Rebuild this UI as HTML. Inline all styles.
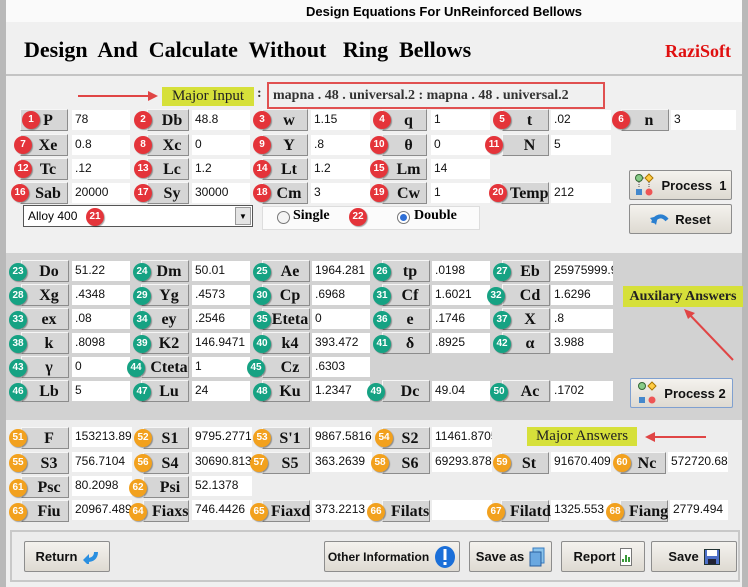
<!DOCTYPE html>
<html><head><meta charset="utf-8"><style>
*{margin:0;padding:0;box-sizing:border-box}
body{width:748px;height:587px;overflow:hidden;background:#b9b9b9;position:relative;font-family:"Liberation Sans",sans-serif}
u{text-decoration:none}
.a{position:absolute}
.c{position:absolute;width:18px;height:18px;border-radius:50%;color:#fff;font:bold 10px "Liberation Sans",sans-serif;font-style:normal;text-align:center;line-height:18px;z-index:2;box-shadow:1px 1px 1px rgba(0,0,0,.35)}
.r{background:#e4343a}.g{background:#16a283}.o{background:#f2a11e}
.l{position:absolute;height:22px;background:#d6d6d6;border:1px solid;border-color:#f6f6f6 #8c8c8c #8c8c8c #f6f6f6;font:bold 16px "Liberation Serif",serif;color:#111;text-align:center;line-height:22px;padding-left:8px;white-space:nowrap}
.v{position:absolute;height:20px;background:#fff;font:12px "Liberation Sans",sans-serif;line-height:18px;padding-left:3px;overflow:hidden;white-space:nowrap;color:#111}
.b{position:absolute;background:linear-gradient(#f4f2ee,#dedad2);border:1px solid #8d8d8d;border-radius:2px;font:bold 13px "Liberation Sans",sans-serif;display:flex;align-items:center;justify-content:center;gap:5px;color:#111;white-space:nowrap}
.y{position:absolute;background:#d6e03a;font:15px "Liberation Serif",serif;color:#222;text-align:center}
</style></head><body>
<div class="a" style="left:6px;top:0;width:736px;height:587px;background:#f0f0f0"></div>
<div class="a" style="left:6px;top:0;width:736px;height:22px;background:#fafafa;font:bold 13px 'Liberation Sans',sans-serif;text-align:center;line-height:24px;padding-left:140px">Design Equations For UnReinforced Bellows</div>
<div class="a" style="left:24px;top:37px;font:bold 22px 'Liberation Serif',serif;white-space:pre">Design  And  Calculate  Without   Ring  Bellows</div>
<div class="a" style="left:665px;top:41px;font:bold 18px 'Liberation Serif',serif;color:#e01010">RaziSoft</div>
<div class="a" style="left:6px;top:74px;width:736px;height:2px;background:#c4c4c4"></div>
<!-- top section -->
<div class="a" style="left:78px;top:95px;width:72px;height:2px;background:#e04545"></div>
<div class="a" style="left:148px;top:91px;border-left:10px solid #e04545;border-top:5px solid transparent;border-bottom:5px solid transparent"></div>
<div class="y" style="left:162px;top:87px;width:92px;height:19px;line-height:19px">Major Input</div>
<div class="a" style="left:257px;top:86px;font:bold 14px 'Liberation Serif',serif;color:#333">:</div>
<div class="a" style="left:267px;top:82px;width:338px;height:27px;border:2px solid #e05050;font:bold 14px 'Liberation Serif',serif;color:#333;line-height:23px;padding-left:4px;white-space:nowrap">mapna . 48 . universal.2 : mapna . 48 . universal.2</div>

<i class="c r" style="left:22px;top:111px">1</i><b class="l" style="left:20px;top:109px;width:48px">P</b><u class="v" style="left:72px;top:110px;width:58px">78</u>
<i class="c r" style="left:134px;top:111px">2</i><b class="l" style="left:147px;top:109px;width:42px">Db</b><u class="v" style="left:192px;top:110px;width:58px">48.8</u>
<i class="c r" style="left:253px;top:111px">3</i><b class="l" style="left:262px;top:109px;width:46px">w</b><u class="v" style="left:311px;top:110px;width:59px">1.15</u>
<i class="c r" style="left:373px;top:111px">4</i><b class="l" style="left:382px;top:109px;width:45px">q</b><u class="v" style="left:431px;top:110px;width:59px">1</u>
<i class="c r" style="left:493px;top:111px">5</i><b class="l" style="left:502px;top:109px;width:47px">t</b><u class="v" style="left:551px;top:110px;width:60px">.02</u>
<i class="c r" style="left:612px;top:111px">6</i><b class="l" style="left:621px;top:109px;width:48px">n</b><u class="v" style="left:671px;top:110px;width:65px">3</u>

<i class="c r" style="left:14px;top:136px">7</i><b class="l" style="left:20px;top:134px;width:48px">Xe</b><u class="v" style="left:72px;top:135px;width:58px">0.8</u>
<i class="c r" style="left:134px;top:136px">8</i><b class="l" style="left:147px;top:134px;width:42px">Xc</b><u class="v" style="left:192px;top:135px;width:58px">0</u>
<i class="c r" style="left:253px;top:136px">9</i><b class="l" style="left:262px;top:134px;width:46px">Y</b><u class="v" style="left:311px;top:135px;width:59px">.8</u>
<i class="c r" style="left:370px;top:136px">10</i><b class="l" style="left:382px;top:134px;width:45px">θ</b><u class="v" style="left:431px;top:135px;width:59px">0</u>
<i class="c r" style="left:485px;top:136px">11</i><b class="l" style="left:502px;top:134px;width:47px">N</b><u class="v" style="left:551px;top:135px;width:60px">5</u>

<i class="c r" style="left:14px;top:160px">12</i><b class="l" style="left:20px;top:158px;width:48px">Tc</b><u class="v" style="left:72px;top:159px;width:58px">.12</u>
<i class="c r" style="left:134px;top:160px">13</i><b class="l" style="left:147px;top:158px;width:42px">Lc</b><u class="v" style="left:192px;top:159px;width:58px">1.2</u>
<i class="c r" style="left:253px;top:160px">14</i><b class="l" style="left:262px;top:158px;width:46px">Lt</b><u class="v" style="left:311px;top:159px;width:59px">1.2</u>
<i class="c r" style="left:370px;top:160px">15</i><b class="l" style="left:382px;top:158px;width:45px">Lm</b><u class="v" style="left:431px;top:159px;width:59px">14</u>

<i class="c r" style="left:11px;top:184px">16</i><b class="l" style="left:20px;top:182px;width:48px">Sab</b><u class="v" style="left:72px;top:183px;width:58px">20000</u>
<i class="c r" style="left:134px;top:184px">17</i><b class="l" style="left:147px;top:182px;width:42px">Sy</b><u class="v" style="left:192px;top:183px;width:58px">30000</u>
<i class="c r" style="left:253px;top:184px">18</i><b class="l" style="left:262px;top:182px;width:46px">Cm</b><u class="v" style="left:311px;top:183px;width:59px">3</u>
<i class="c r" style="left:370px;top:184px">19</i><b class="l" style="left:382px;top:182px;width:45px">Cw</b><u class="v" style="left:431px;top:183px;width:59px">1</u>
<i class="c r" style="left:489px;top:184px">20</i><b class="l" style="left:501px;top:182px;width:48px">Temp</b><u class="v" style="left:551px;top:183px;width:60px">212</u>

<div class="a" style="left:23px;top:205px;width:230px;height:22px;background:#fff;border:1px solid #555;font:12px 'Liberation Sans',sans-serif;line-height:20px;padding-left:4px">Alloy 400</div>
<div class="a" style="left:235px;top:207px;width:16px;height:18px;background:#e4e4e4;border:1px solid #999;font-size:8px;text-align:center;line-height:17px">▼</div>
<i class="c r" style="left:86px;top:208px">21</i>
<div class="a" style="left:262px;top:206px;width:218px;height:24px;background:#fbfbfb;border:1px solid #ddd"></div>
<div class="a" style="left:277px;top:211px;width:13px;height:13px;border-radius:50%;border:1px solid #777;background:#f4f4f4"></div>
<div class="a" style="left:293px;top:208px;font:bold 14px 'Liberation Serif',serif">Single</div>
<i class="c r" style="left:349px;top:208px">22</i>
<div class="a" style="left:397px;top:211px;width:13px;height:13px;border-radius:50%;border:1px solid #777;background:#fff"><div style="margin:2px;width:7px;height:7px;border-radius:50%;background:#2f6fd6"></div></div>
<div class="a" style="left:414px;top:208px;font:bold 14px 'Liberation Serif',serif">Double</div>

<div class="b" style="left:629px;top:170px;width:103px;height:30px"><svg width="22" height="24"><circle cx="5" cy="5" r="3.5" fill="#8c8" stroke="#363"/><path d="M15 1l4 4-4 4-4-4z" fill="#fc4" stroke="#a70"/><rect x="2" y="16" width="6" height="6" fill="#48c"/><circle cx="15" cy="19" r="3.5" fill="#e55"/><path d="M9 5h2M5 9v6M15 9v6" stroke="#555" stroke-dasharray="1 1"/></svg>Process &nbsp;1</div>
<div class="b" style="left:629px;top:204px;width:103px;height:30px"><svg width="20" height="14"><path d="M3 11C5 4 12 2 17 8" fill="none" stroke="#2a7fd0" stroke-width="4"/><path d="M0 6l6 7 2-9z" fill="#2a7fd0"/></svg>Reset</div>

<!-- middle -->
<div class="a" style="left:6px;top:253px;width:736px;height:167px;background:#d2d2d2"></div>
<i class="c g" style="left:9px;top:263px">23</i><b class="l" style="left:21px;top:260px;width:48px">Do</b><u class="v" style="left:72px;top:261px;width:58px">51.22</u>
<i class="c g" style="left:133px;top:263px">24</i><b class="l" style="left:141px;top:260px;width:48px">Dm</b><u class="v" style="left:192px;top:261px;width:58px">50.01</u>
<i class="c g" style="left:253px;top:263px">25</i><b class="l" style="left:262px;top:260px;width:48px">Ae</b><u class="v" style="left:312px;top:261px;width:58px">1964.281</u>
<i class="c g" style="left:373px;top:263px">26</i><b class="l" style="left:382px;top:260px;width:48px">tp</b><u class="v" style="left:432px;top:261px;width:58px">.0198</u>
<i class="c g" style="left:493px;top:263px">27</i><b class="l" style="left:502px;top:260px;width:48px">Eb</b><u class="v" style="left:551px;top:261px;width:62px">25975999.9</u>

<i class="c g" style="left:9px;top:287px">28</i><b class="l" style="left:21px;top:284px;width:48px">Xg</b><u class="v" style="left:72px;top:285px;width:58px">.4348</u>
<i class="c g" style="left:133px;top:287px">29</i><b class="l" style="left:141px;top:284px;width:48px">Yg</b><u class="v" style="left:192px;top:285px;width:58px">.4573</u>
<i class="c g" style="left:253px;top:287px">30</i><b class="l" style="left:262px;top:284px;width:48px">Cp</b><u class="v" style="left:312px;top:285px;width:58px">.6968</u>
<i class="c g" style="left:373px;top:287px">31</i><b class="l" style="left:382px;top:284px;width:48px">Cf</b><u class="v" style="left:432px;top:285px;width:58px">1.6021</u>
<i class="c g" style="left:487px;top:287px">32</i><b class="l" style="left:502px;top:284px;width:48px">Cd</b><u class="v" style="left:551px;top:285px;width:62px">1.6296</u>

<i class="c g" style="left:9px;top:311px">33</i><b class="l" style="left:21px;top:308px;width:48px">ex</b><u class="v" style="left:72px;top:309px;width:58px">.08</u>
<i class="c g" style="left:133px;top:311px">34</i><b class="l" style="left:141px;top:308px;width:48px">ey</b><u class="v" style="left:192px;top:309px;width:58px">.2546</u>
<i class="c g" style="left:253px;top:311px">35</i><b class="l" style="left:262px;top:308px;width:48px">Eteta</b><u class="v" style="left:312px;top:309px;width:58px">0</u>
<i class="c g" style="left:373px;top:311px">36</i><b class="l" style="left:382px;top:308px;width:48px">e</b><u class="v" style="left:432px;top:309px;width:58px">.1746</u>
<i class="c g" style="left:493px;top:311px">37</i><b class="l" style="left:502px;top:308px;width:48px">X</b><u class="v" style="left:551px;top:309px;width:62px">.8</u>

<i class="c g" style="left:9px;top:335px">38</i><b class="l" style="left:21px;top:332px;width:48px">k</b><u class="v" style="left:72px;top:333px;width:58px">.8098</u>
<i class="c g" style="left:133px;top:335px">39</i><b class="l" style="left:141px;top:332px;width:48px">K2</b><u class="v" style="left:192px;top:333px;width:58px">146.9471</u>
<i class="c g" style="left:253px;top:335px">40</i><b class="l" style="left:262px;top:332px;width:48px">k4</b><u class="v" style="left:312px;top:333px;width:58px">393.472</u>
<i class="c g" style="left:373px;top:335px">41</i><b class="l" style="left:382px;top:332px;width:48px">δ</b><u class="v" style="left:432px;top:333px;width:58px">.8925</u>
<i class="c g" style="left:493px;top:335px">42</i><b class="l" style="left:502px;top:332px;width:48px">α</b><u class="v" style="left:551px;top:333px;width:62px">3.988</u>

<i class="c g" style="left:9px;top:359px">43</i><b class="l" style="left:21px;top:356px;width:48px">γ</b><u class="v" style="left:72px;top:357px;width:58px">0</u>
<i class="c g" style="left:127px;top:359px">44</i><b class="l" style="left:141px;top:356px;width:48px">Cteta</b><u class="v" style="left:192px;top:357px;width:58px">1</u>
<i class="c g" style="left:247px;top:359px">45</i><b class="l" style="left:262px;top:356px;width:48px">Cz</b><u class="v" style="left:312px;top:357px;width:58px">.6303</u>

<i class="c g" style="left:9px;top:383px">46</i><b class="l" style="left:21px;top:380px;width:48px">Lb</b><u class="v" style="left:72px;top:381px;width:58px">5</u>
<i class="c g" style="left:133px;top:383px">47</i><b class="l" style="left:141px;top:380px;width:48px">Lu</b><u class="v" style="left:192px;top:381px;width:58px">24</u>
<i class="c g" style="left:253px;top:383px">48</i><b class="l" style="left:262px;top:380px;width:48px">Ku</b><u class="v" style="left:312px;top:381px;width:58px">1.2347</u>
<i class="c g" style="left:367px;top:383px">49</i><b class="l" style="left:382px;top:380px;width:48px">Dc</b><u class="v" style="left:432px;top:381px;width:58px">49.04</u>
<i class="c g" style="left:490px;top:383px">50</i><b class="l" style="left:502px;top:380px;width:48px">Ac</b><u class="v" style="left:551px;top:381px;width:62px">.1702</u>

<div class="y" style="left:623px;top:286px;width:120px;height:21px;line-height:21px;font-weight:bold;font-size:14px">Auxilary Answers</div>
<svg class="a" style="left:680px;top:306px" width="60" height="60"><path d="M53 54L9 8" stroke="#e04545" stroke-width="2"/><path d="M4 3l11 4-7 6z" fill="#e04545"/></svg>
<div class="b" style="left:630px;top:378px;width:103px;height:30px;border-color:#7fa0d0"><svg width="22" height="24"><circle cx="5" cy="5" r="3.5" fill="#8c8" stroke="#363"/><path d="M15 1l4 4-4 4-4-4z" fill="#fc4" stroke="#a70"/><rect x="2" y="16" width="6" height="6" fill="#48c"/><circle cx="15" cy="19" r="3.5" fill="#e55"/></svg>Process 2</div>

<!-- bottom -->
<div class="a" style="left:6px;top:420px;width:736px;height:110px;background:#ededed"></div>
<div class="y" style="left:527px;top:427px;width:110px;height:19px;line-height:19px">Major Answers</div>
<div class="a" style="left:654px;top:436px;width:52px;height:2px;background:#e04545"></div>
<div class="a" style="left:645px;top:432px;border-right:10px solid #e04545;border-top:5px solid transparent;border-bottom:5px solid transparent"></div>

<i class="c o" style="left:9px;top:429px">51</i><b class="l" style="left:21px;top:427px;width:48px">F</b><u class="v" style="left:72px;top:427px;width:60px">153213.899</u>
<i class="c o" style="left:134px;top:429px">52</i><b class="l" style="left:143px;top:427px;width:46px">S1</b><u class="v" style="left:192px;top:427px;width:60px">9795.2771</u>
<i class="c o" style="left:253px;top:429px">53</i><b class="l" style="left:262px;top:427px;width:48px">S'1</b><u class="v" style="left:312px;top:427px;width:60px">9867.5816</u>
<i class="c o" style="left:375px;top:429px">54</i><b class="l" style="left:382px;top:427px;width:48px">S2</b><u class="v" style="left:432px;top:427px;width:60px">11461.8705</u>

<i class="c o" style="left:9px;top:454px">55</i><b class="l" style="left:21px;top:452px;width:48px">S3</b><u class="v" style="left:72px;top:452px;width:60px">756.7104</u>
<i class="c o" style="left:134px;top:454px">56</i><b class="l" style="left:143px;top:452px;width:46px">S4</b><u class="v" style="left:192px;top:452px;width:60px">30690.8131</u>
<i class="c o" style="left:250px;top:454px">57</i><b class="l" style="left:262px;top:452px;width:48px">S5</b><u class="v" style="left:312px;top:452px;width:60px">363.2639</u>
<i class="c o" style="left:371px;top:454px">58</i><b class="l" style="left:382px;top:452px;width:48px">S6</b><u class="v" style="left:432px;top:452px;width:60px">69293.8787</u>
<i class="c o" style="left:493px;top:454px">59</i><b class="l" style="left:501px;top:452px;width:48px">St</b><u class="v" style="left:551px;top:452px;width:60px">91670.409</u>
<i class="c o" style="left:613px;top:454px">60</i><b class="l" style="left:620px;top:452px;width:46px">Nc</b><u class="v" style="left:668px;top:452px;width:60px">572720.6839</u>

<i class="c o" style="left:9px;top:479px">61</i><b class="l" style="left:21px;top:476px;width:48px">Psc</b><u class="v" style="left:72px;top:476px;width:60px">80.2098</u>
<i class="c o" style="left:129px;top:479px">62</i><b class="l" style="left:143px;top:476px;width:46px">Psi</b><u class="v" style="left:192px;top:476px;width:60px">52.1378</u>

<i class="c o" style="left:9px;top:503px">63</i><b class="l" style="left:21px;top:500px;width:48px">Fiu</b><u class="v" style="left:72px;top:500px;width:60px">20967.4896</u>
<i class="c o" style="left:129px;top:503px">64</i><b class="l" style="left:143px;top:500px;width:46px">Fiaxs</b><u class="v" style="left:192px;top:500px;width:60px">746.4426</u>
<i class="c o" style="left:250px;top:503px">65</i><b class="l" style="left:262px;top:500px;width:48px">Fiaxd</b><u class="v" style="left:312px;top:500px;width:60px">373.2213</u>
<i class="c o" style="left:367px;top:503px">66</i><b class="l" style="left:382px;top:500px;width:48px">Filats</b><u class="v" style="left:432px;top:500px;width:60px"></u>
<i class="c o" style="left:487px;top:503px">67</i><b class="l" style="left:501px;top:500px;width:48px">Filatd</b><u class="v" style="left:551px;top:500px;width:60px">1325.553</u>
<i class="c o" style="left:606px;top:503px">68</i><b class="l" style="left:620px;top:500px;width:48px">Fiang</b><u class="v" style="left:670px;top:500px;width:58px">2779.494</u>

<!-- bottom bar -->
<div class="a" style="left:10px;top:530px;width:730px;height:52px;border:2px solid #c8c8c8;background:#ececec"></div>
<div class="b" style="left:24px;top:541px;width:86px;height:31px">Return <svg width="16" height="14"><path d="M14 2c0 6-4 8-9 8" fill="none" stroke="#2a8fe0" stroke-width="4"/><path d="M1 10l6-6v12z" fill="#2a8fe0"/></svg></div>
<div class="b" style="left:324px;top:541px;width:136px;height:31px;font-size:12px">Other Information <svg width="22" height="24"><ellipse cx="11" cy="12" rx="10" ry="11" fill="#1b6fd8"/><rect x="9.5" y="4" width="3" height="11" fill="#fff"/><rect x="9.5" y="17" width="3" height="3" fill="#fff"/></svg></div>
<div class="b" style="left:469px;top:541px;width:83px;height:31px">Save as <svg width="16" height="20"><rect x="4" y="1" width="11" height="15" fill="#8bc4ec" stroke="#3a7cc0"/><rect x="1" y="5" width="11" height="14" fill="#6aa8e0" stroke="#2a5f9e"/></svg></div>
<div class="b" style="left:561px;top:541px;width:84px;height:31px">Report <svg width="12" height="18"><rect x="0.5" y="0.5" width="11" height="17" fill="#fff" stroke="#777"/><path d="M3 14v-3M6 14v-7M9 14v-5" stroke="#3a9a3a" stroke-width="2"/></svg></div>
<div class="b" style="left:651px;top:541px;width:86px;height:31px">Save <svg width="16" height="16"><rect x="0.5" y="0.5" width="15" height="15" fill="#4d6fc8" stroke="#233"/><rect x="3" y="1" width="10" height="6" fill="#fff"/><rect x="4" y="10" width="8" height="5" fill="#223"/></svg></div>
</body></html>
